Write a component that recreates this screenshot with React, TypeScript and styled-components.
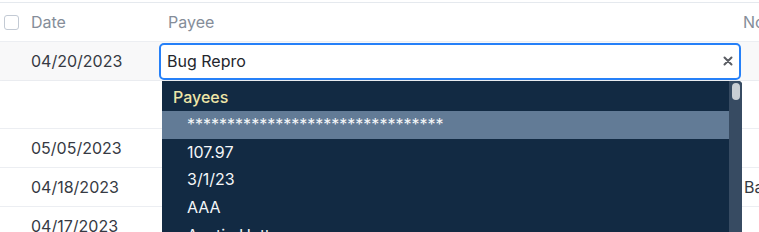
import styled, { createGlobalStyle } from 'styled-components'

const Global = createGlobalStyle`
  html, body {
    margin: 0;
    padding: 0;
    background: #ffffff;
    overflow: hidden;
  }
  body {
    font-family: Inter, "Noto Sans", sans-serif;
    font-size: 16px;
    color: #2b2f38;
  }
`

const Page = styled.div`
  padding-top: 2px;
  position: relative;
  width: 759px;
  height: 232px;
  overflow: hidden;
`

const Table = styled.div`
  border-top: 1px solid #e5e9ee;
`

const Row = styled.div<{ $bg?: string; $height?: number; $shadow?: boolean }>`
  display: grid;
  grid-template-columns: 23px 136px 583px 1fr;
  align-items: center;
  height: ${p => p.$height ?? 38}px;
  background: ${p => p.$bg ?? '#fff'};
  border-bottom: 1px solid #eceef2;
  box-shadow: ${p => (p.$shadow ? '0 2px 4px rgba(0,0,0,0.08)' : 'none')};
  position: relative;
  white-space: nowrap;
`

const HeaderCell = styled.div<{ $pad?: number }>`
  color: #858d99;
  padding-left: ${p => p.$pad ?? 8}px;
  overflow: hidden;
`

const Cell = styled.div<{ $pad?: number }>`
  color: #363a43;
  padding-left: ${p => p.$pad ?? 8}px;
  overflow: hidden;
`

const Checkbox = styled.div`
  width: 13px;
  height: 13px;
  margin-left: 4px;
  border: 1px solid #c3cad4;
  border-radius: 3px;
  background: #fff;
`

const InputBox = styled.div`
  height: 33px;
  margin-right: 1px;
  border: 2px solid #2680f8;
  border-radius: 5px;
  background: #fff;
  display: flex;
  align-items: center;
  padding: 0 6px 0 6px;
  color: #24262d;
`

const InputText = styled.span`
  flex: 1;
`

const ClearButton = styled.div`
  display: flex;
  align-items: center;
  color: #5a5d63;
`

const Dropdown = styled.div`
  position: absolute;
  left: 162px;
  top: 81px;
  width: 580px;
  height: 200px;
  background: #122a43;
  display: flex;
  border-radius: 0 4px 0 0;
`

const List = styled.div`
  flex: 1;
  padding-top: 2px;
`

const GroupTitle = styled.div`
  height: 28px;
  line-height: 28px;
  padding-left: 11px;
  color: #efe6a8;
  font-weight: 500;
`

const Item = styled.div<{ $active?: boolean }>`
  height: 27.7px;
  line-height: 27.7px;
  padding-left: 25px;
  color: #f4f6f8;
  background: ${p => (p.$active ? '#627b96' : 'transparent')};
`

const Scrollbar = styled.div`
  width: 13px;
  background: #374b62;
  border-radius: 0 4px 0 0;
  display: flex;
  justify-content: center;
  padding-top: 2px;
`

const Thumb = styled.div`
  width: 8px;
  height: 17px;
  border-radius: 4px;
  background: #c9ced3;
`

const rows = [
  { date: '05/05/2023', notes: '' },
  { date: '04/18/2023', notes: 'Ba' },
  { date: '04/17/2023', notes: '' },
]

const items = ['107.97', '3/1/23', 'AAA', 'Austin Hatter']

export default function App() {
  return (
    <Page>
      <Global />
      <Table>
        <Row>
          <div><Checkbox /></div>
          <HeaderCell>Date</HeaderCell>
          <HeaderCell $pad={9}>Payee</HeaderCell>
          <HeaderCell $pad={1}>Notes</HeaderCell>
        </Row>
        <Row $bg="#f8f8f9">
          <div />
          <Cell>04/20/2023</Cell>
          <InputBox>
            <InputText>Bug Repro</InputText>
            <ClearButton>
              <svg width="10" height="10" viewBox="0 0 10 10">
                <path d="M1.5 1.5 L8.5 8.5 M8.5 1.5 L1.5 8.5" stroke="currentColor" strokeWidth="2" strokeLinecap="round" />
              </svg>
            </ClearButton>
          </InputBox>
          <div />
        </Row>
        <Row $height={47} $shadow />
        {rows.map(r => (
          <Row key={r.date}>
            <div />
            <Cell>{r.date}</Cell>
            <Cell />
            <Cell $pad={2}>{r.notes}</Cell>
          </Row>
        ))}
      </Table>
      <Dropdown>
        <List>
          <GroupTitle>Payees</GroupTitle>
          <Item $active>********************************</Item>
          {items.map(i => (
            <Item key={i}>{i}</Item>
          ))}
        </List>
        <Scrollbar>
          <Thumb />
        </Scrollbar>
      </Dropdown>
    </Page>
  )
}
